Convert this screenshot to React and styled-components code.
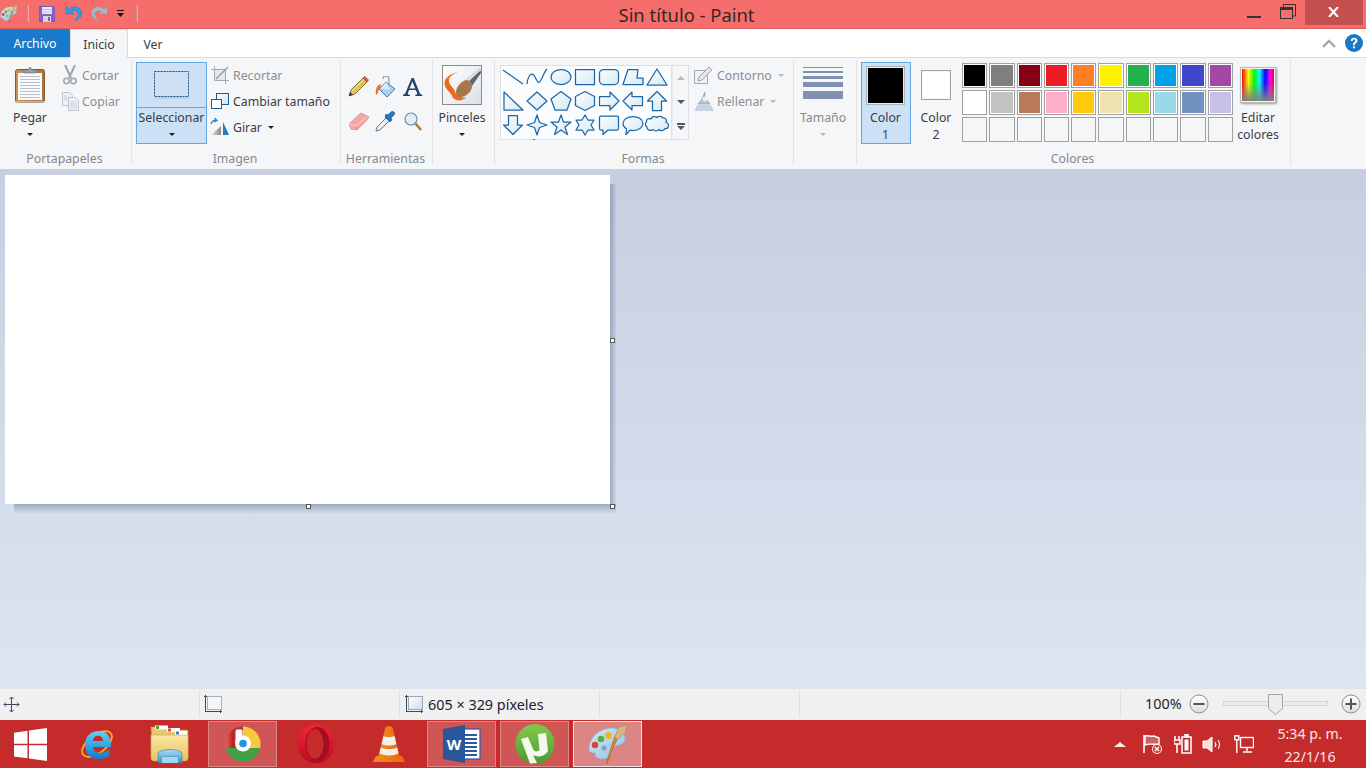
import React from "react";
import styled, { createGlobalStyle } from "styled-components";

const Global = createGlobalStyle`
  html, body { margin: 0; padding: 0; height: 100%; overflow: hidden; }
  body { font-family: "Noto Sans", "Open Sans", sans-serif; font-size: 12.3px; color: #3b3b45; }
  #root { height: 100%; }
  svg { display: block; flex: none; }
`;

const Page = styled.div`
  width: 1366px; height: 768px; display: flex; flex-direction: column; overflow: hidden;
`;
const TitleBar = styled.header`
  height: 28px; flex: none; background: #f56e6c; border-bottom: 1px solid #d85d5b;
  display: flex; align-items: flex-start; position: relative;
`;
const QuickBar = styled.div`
  display: flex; align-items: center; height: 27px; width: 140px; flex: none;
`;
const QuickItem = styled.span`display: block; flex: none; margin-left: ${p => p.$ml || 0}px;`;
const QuickSep = styled.span`
  width: 1px; height: 17px; background: #c98b8b; box-shadow: 1px 0 0 #f9a5a3; margin: ${p => p.$m};
`;
const TitleText = styled.h1`
  flex: 1; margin: 0; font-weight: 400; font-size: 18.4px; line-height: 29px; color: #3a2626;
  text-align: center; padding-right: 4px; white-space: nowrap;
`;
const WinControls = styled.div`display: flex; height: 26px; flex: none; padding-right: 3px;`;
const WinBtn = styled.div`
  width: ${p => p.$w}px; height: 25px; box-sizing: border-box; display: flex; align-items: center; justify-content: center;
  padding: ${p => p.$pad || "0"};
  background: ${p => p.$bg || "transparent"};
`;

const TabRow = styled.nav`
  height: 28px; flex: none; background: #fff; border-bottom: 1px solid #dadbdc; display: flex; align-items: stretch;
`;
const FileTab = styled.div`
  width: 70px; background: #1979ca; color: #fff; display: flex; align-items: center; justify-content: center;
  height: 28px; box-sizing: border-box;
`;
const Tab = styled.div`
  width: ${p => p.$w}px; height: 29px; box-sizing: border-box; display: flex; align-items: center; justify-content: center;
  padding-top: 1px; color: #3b3b45;
  ${p => p.$active ? "background:#f5f6f7;border:1px solid #dadbdc;border-bottom:none;" : ""}
`;
const TabEnd = styled.div`
  margin-left: auto; display: flex; align-items: center; gap: 9px; padding-right: 3px;
`;

const Ribbon = styled.section`
  flex: none; background: #f5f6f7; border-bottom: 1px solid #ccd2db;
  padding-top: 2px; box-sizing: content-box; display: flex; height: 109px;
`;
const Group = styled.div`
  width: ${p => p.$w}px; height: 105px; box-sizing: border-box; border-right: 1px solid #e2e4e7; flex: none;
  display: flex; flex-direction: column;
`;
const GroupBody = styled.div`
  height: 89px; flex: none; padding: 2px 0 0 ${p => p.$pl || 0}px; box-sizing: border-box; display: flex; align-items: flex-start;
  padding-right: ${p => p.$pr || 0}px;
`;
const GroupLabel = styled.div`
  height: 16px; line-height: 19px; text-align: center; color: #85888d; padding-right: 2px; white-space: nowrap;
`;
const LargeBtn = styled.div`
  width: ${p => p.$w}px; height: 82px; box-sizing: border-box; flex: none; display: flex; flex-direction: column; align-items: center;
  border: 1px solid ${p => p.$on ? "#62a6e6" : "transparent"}; background: ${p => p.$on ? "#cce0f6" : "transparent"};
  color: ${p => p.$off ? "#85888d" : "#3b3b45"}; padding-right: ${p => p.$pr || 0}px;
`;
const LargeIcon = styled.div`
  height: 44px; flex: none; align-self: stretch; display: flex; align-items: center; justify-content: center;
  ${p => p.$div ? "border-bottom:1px solid #62a6e6;" : "padding-bottom:1px;"}
`;
const LargeText = styled.div`
  height: 17px; line-height: 17px; white-space: nowrap; flex: none; margin-top: ${p => p.$mt || 0}px; display: flex; align-items: center;
`;
const SmallCol = styled.div`display: flex; flex-direction: column; margin-left: ${p => p.$ml || 0}px;`;
const SmallRow = styled.div`
  height: 26px; display: flex; align-items: center; gap: 4px; white-space: nowrap;
  color: ${p => p.$off ? "#8b8e93" : "#3b3b45"};
`;
const SmallIcon = styled.span`width: ${p => p.$w}px; display: flex; justify-content: center; flex: none;`;
const Caret = styled.span`
  width: 0; height: 0; border-left: 3px solid transparent; border-right: 3px solid transparent;
  border-top: 3px solid ${p => p.$c || "#222"}; margin-left: ${p => p.$ml || 0}px; display: block;
`;
const ToolGrid = styled.div`
  display: grid; grid-template-columns: repeat(3, 27px); grid-auto-rows: 35px; margin-top: 7px;
`;
const Tool = styled.div`display: flex; align-items: center; justify-content: center;`;
const Gallery = styled.div`
  display: flex; margin-top: 3px; height: 75px; position: relative;
`;
const ShapeGrid = styled.div`
  width: 172px; height: 75px; box-sizing: border-box; border: 1px solid #dcdfe3; background: #fbfcfe; display: grid;
  grid-template-columns: repeat(7, 24px); grid-auto-rows: 24px;
`;
const Shape = styled.div`width: 24px; height: 24px;`;
const Dot = styled.span`position: absolute; left: 33px; bottom: 0; width: 2px; height: 1px; background: #2a6db0;`;
const ScrollCol = styled.div`
  width: 17px; box-sizing: border-box; border: 1px solid #dcdfe3; border-left: 1px solid #e8eaed; background: #f5f6f7;
  display: flex; flex-direction: column;
`;
const ScrollBtn = styled.div`height: 24px; display: flex; align-items: center; justify-content: center;`;
const UpTri = styled.span`
  width: 0; height: 0; border-left: 4px solid transparent; border-right: 4px solid transparent; border-bottom: 4px solid #b9bcc1;
`;
const DownTri = styled.span`
  width: 0; height: 0; border-left: 4px solid transparent; border-right: 4px solid transparent; border-top: 4px solid #4e5866;
`;
const MoreBtn = styled.span`
  width: 8px; border-top: 2px solid #4e5866; padding-top: 1px; display: block;
  &::after { content: ""; display: block; width: 0; height: 0; border-left: 4px solid transparent; border-right: 4px solid transparent; border-top: 4px solid #4e5866; }
`;
const SizeLines = styled.div`
  width: 40px; height: 32px; display: flex; flex-direction: column; gap: 3px; margin-bottom: 4px;
`;
const SizeLine = styled.span`display: block; height: ${p => p.$h}px; background: #7f90b0; flex: none; margin-top: ${p => p.$mt || 0}px;`;
const Swatch1 = styled.div`
  width: 39px; height: 39px; box-sizing: border-box; border: 1px solid #8c8c8c; padding: 1px; background: #e9eef5;
  display: flex; outline: 1px solid #a9b2bd; outline-offset: -1px;
  &::after { content: ""; flex: 1; background: #000; }
`;
const Swatch2 = styled.div`
  width: 30px; height: 30px; box-sizing: border-box; border: 1px solid #a0a0a0; background: #fff; box-shadow: inset 0 0 2px #ddd;
`;
const Palette = styled.div`
  width: 271px; flex: none; margin: 1px 0 0 1px; display: grid; grid-template-columns: repeat(10, 1fr); grid-auto-rows: 25px; gap: 2px;
`;
const Cell = styled.div`
  box-sizing: border-box; border: 1px solid #a0a0a0; padding: 1px; background: ${p => p.$empty ? "#f5f6f7" : "#fff"}; display: flex;
  &::after { content: ""; flex: 1; background: ${p => p.$c || "transparent"}; }
`;
const Spectrum = styled.div`
  width: 36px; height: 36px; box-sizing: border-box; border: 1px solid #b9b9b9; padding: 1px; background: #f7f7f7; box-shadow: 1px 1px 2px #999; display: flex;
  &::after { content: ""; flex: 1;
    background: linear-gradient(to bottom, rgba(128,128,128,0) 0%, rgba(128,128,128,.1) 45%, rgba(128,128,128,1) 100%),
      linear-gradient(to right, #f00, #ff0 20%, #0f0 38%, #0ff 55%, #00f 72%, #f0f 88%, #f00); }
`;

const Workspace = styled.main`
  flex: 1; min-height: 0; padding: 5px; box-sizing: border-box; background: linear-gradient(to bottom, #c5cfe0, #dce5f1);
`;
const Canvas = styled.div`
  width: 605px; height: 329px; background: #fff; position: relative;
  &::before { content: ""; position: absolute; left: 100%; top: 9px; width: 6px; height: 320px;
    background: linear-gradient(to right, rgba(80,100,135,.42), rgba(80,100,135,.06)); }
  &::after { content: ""; position: absolute; top: 100%; left: 9px; width: 602px; height: 9px;
    background: linear-gradient(to bottom, rgba(80,100,135,.42), rgba(80,100,135,.05)); }
`;
const Handle = styled.span`
  position: absolute; width: 3px; height: 3px; background: #fff; border: 1px solid #555; z-index: 1;
  left: ${p => p.$x}px; top: ${p => p.$y}px;
`;

const Status = styled.footer`
  height: 31px; flex: none; background: #f0f0f0; border-top: 1px solid #dde3ea; display: flex; font-size: 14.4px; color: #1c2230;
`;
const StatusCell = styled.div`
  width: ${p => p.$w}px; flex: none; box-sizing: border-box; border-right: 1px solid #dfdfdf; margin: 1px 0 2px; display: flex; align-items: center; gap: 4px; padding-left: ${p => p.$pl || 0}px; white-space: nowrap;
`;
const ZoomArea = styled.div`
  flex: 1; display: flex; align-items: center; padding-left: 24px; white-space: nowrap; padding-bottom: 2px;
`;
const ZoomPct = styled.span`width: 44px; flex: none;`;
const Slider = styled.div`
  width: 105px; height: 5px; border: 1px solid #d6d6d6; box-sizing: border-box; background: #ececec; margin: 0 13px 0 14px; position: relative;
`;
const Thumb = styled.span`position: absolute; left: 44px; top: -8px;`;

const Taskbar = styled.footer`
  height: 48px; flex: none; background: #c52b2b; display: flex; align-items: center; color: #fff;
`;
const Start = styled.div`width: 58px; flex: none; display: flex; justify-content: center; padding-left: 2px; box-sizing: border-box;`;
const Apps = styled.div`display: flex; gap: 4px; margin-left: 4px; height: 48px; align-items: center;`;
const AppSlot = styled.div`
  width: 69px; height: 46px; box-sizing: border-box; display: flex; align-items: center; justify-content: center;
  background: ${p => p.$state === "open" ? "rgba(255,255,255,.2)" : p.$state === "active" ? "rgba(255,255,255,.42)" : "transparent"};
  border: 1px solid ${p => p.$state === "open" ? "rgba(255,255,255,.3)" : p.$state === "active" ? "#f1e3e3" : "transparent"};
`;
const Tray = styled.div`margin-left: auto; display: flex; align-items: center; height: 48px;`;
const TrayItem = styled.span`width: ${p => p.$w}px; display: flex; justify-content: center; flex: none;`;
const TrayUp = styled.span`
  width: 0; height: 0; border-left: 6px solid transparent; border-right: 6px solid transparent; border-bottom: 5px solid #fbe7e7;
`;
const Clock = styled.div`
  width: 104px; text-align: center; font-size: 14.2px; line-height: 23px; flex: none; padding: 2px 8px 0 0; box-sizing: border-box; color: #f6e4e4; white-space: nowrap;
`;

/* ---------- icons ---------- */
const PaletteIcon = ({ size = 18 }) => (
  <svg width={size} height={size} viewBox="0 0 40 40">
    <defs><linearGradient id="pal" x1="0" y1="0" x2="1" y2="1"><stop offset="0" stopColor="#d3e7f4" /><stop offset="1" stopColor="#8fc3e2" /></linearGradient></defs>
    <path d="M1 25C1 13 12 4 24 4c8 0 13 5 13 11 0 5-6 6-9 7-4 2-3 6-5 9-3 5-11 5-15 2-2-2 1-4-2-4-3 0-5-1-5-4z" fill="url(#pal)" stroke="#86b3cf" strokeWidth=".7" />
    <circle cx="7" cy="21" r="3.200" fill="#d8423a" /><circle cx="13" cy="15" r="3.200" fill="#59ab45" /><circle cx="20.500" cy="11.500" r="3.400" fill="#f1b51f" /><circle cx="16" cy="24" r="2.600" fill="#7f9fc9" />
    <path d="M29 15l-9 22-1.200 2.500.3-3L26.500 13z" fill="#e2832a" stroke="#a9591c" strokeWidth=".6" />
    <path d="M26.500 13L31 3l8-2.500-1.500 8L30 15.500z" fill="#d9b483" stroke="#a88a5c" strokeWidth=".6" />
  </svg>
);
const SaveIcon = () => (
  <svg width="16" height="16" viewBox="0 0 16 16">
    <path d="M0 0h14l2 2v14H0z" fill="#8662c4" stroke="#6a4ba6" strokeWidth=".6" />
    <rect x="3" y="1" width="10" height="7" fill="#e8eef6" /><rect x="3" y="3" width="10" height="1" fill="#b8c4d6" /><rect x="3" y="5.500" width="10" height="1" fill="#b8c4d6" />
    <rect x="4" y="10" width="8" height="6" fill="#d9d3e8" /><rect x="9" y="11" width="2" height="4" fill="#7d61b4" />
  </svg>
);
const UndoIcon = ({ c = "#2b9ce8", d = "#1b6fb8" }) => (
  <svg width="17" height="17" viewBox="0 0 17 17">
    <path d="M1 1v8h8L6.500 6.500C8 5.500 11 5 12.500 7c1.500 2 .5 5.500-3 8.500 3.500-.3 7-3 7-7.500C16.500 3 11 .5 6.500 2.500L4 4.500 1 1z" fill={c} stroke={d} strokeWidth=".4" />
  </svg>
);
const RedoIcon = () => (
  <svg width="17" height="17" viewBox="0 0 17 17"><g transform="matrix(-1 0 0 1 17 0)"><path d="M1 1v8h8L6.500 6.500C8 5.500 11 5 12.500 7c1.500 2 .5 5.500-3 8.500 3.500-.3 7-3 7-7.500C16.500 3 11 .5 6.500 2.500L4 4.500 1 1z" fill="#a9b8c8" stroke="#8b9bad" strokeWidth=".4" /></g></svg>
);
const QatMore = () => (
  <svg width="8" height="8" viewBox="0 0 8 8"><rect y="0" width="7" height="1" fill="#111" /><path d="M0 3h7L3.500 7z" fill="#111" /></svg>
);
const Clipboard = () => (
  <svg width="32" height="38" viewBox="0 0 32 38">
    <defs><linearGradient id="brd" x1="0" x2="1"><stop offset="0" stopColor="#c4915b" /><stop offset="1" stopColor="#a9743f" /></linearGradient></defs>
    <rect x="1.500" y="3.500" width="29" height="33" rx="2" fill="url(#brd)" stroke="#85592e" />
    <rect x="1" y="35" width="30" height="2" fill="#cfd3d8" opacity=".6" />
    <rect x="4" y="7" width="24" height="27" fill="#fafafa" />
    {[10, 13, 16, 19, 22, 25, 28, 31].map(y => <rect key={y} x="6" y={y} width="20" height="1" fill="#b8bfd0" />)}
    <path d="M10 7V4h4l2-3 2 3h4v3z" fill="#9aa0a8" stroke="#6f747b" strokeWidth=".7" />
  </svg>
);
const Scissors = () => (
  <svg width="14" height="20" viewBox="0 0 14 20" fill="none" stroke="#9aa5b1">
    <path d="M2 0l6 13M12 0L6 13" strokeWidth="2" /><circle cx="3.500" cy="16" r="2.700" strokeWidth="1.500" /><circle cx="10.500" cy="16" r="2.700" strokeWidth="1.500" />
  </svg>
);
const CopyIcon = () => (
  <svg width="17" height="19" viewBox="0 0 17 19" fill="#f0f3f6" stroke="#bcc5cf">
    <path d="M.5.5h7l3 3v10H.5z" /><path d="M6.500 5.500h7l3 3v10h-10z" /><path d="M8 10h7M8 12h7M8 14h7M8 16h7M2 4h4M2 6h3M2 8h3" strokeWidth=".8" />
  </svg>
);
const SelectIcon = () => (
  <svg width="36" height="28" viewBox="0 0 36 28">
    <rect x="1" y="26" width="35" height="2" fill="#bcd0e8" />
    <rect x=".5" y=".5" width="34" height="25" fill="#cfe0f4" stroke="#174f86" strokeDasharray="2 1" />
  </svg>
);
const CropIcon = () => (
  <svg width="18" height="18" viewBox="0 0 18 18" fill="none" stroke="#a0abb6">
    <rect x="4" y="4" width="10" height="10" fill="#dde3ea" stroke="none" opacity=".7" />
    <path d="M3.500 0v14.500H18M0 3.500h14.500V18" /><path d="M5 13L17 1" stroke="#8a97a5" strokeWidth="1.300" />
  </svg>
);
const ResizeIcon = () => (
  <svg width="18" height="16" viewBox="0 0 18 16">
    <defs><linearGradient id="rs" x1="0" y1="0" x2="1" y2="1"><stop offset="0" stopColor="#fff" /><stop offset="1" stopColor="#cfe3f2" /></linearGradient></defs>
    <rect x="5.500" y=".5" width="12" height="11" fill="url(#rs)" stroke="#1c5e9a" />
    <rect x=".5" y="6.500" width="10" height="9" fill="#fff" stroke="#1c5e9a" />
  </svg>
);
const RotateIcon = () => (
  <svg width="20" height="18" viewBox="0 0 20 18">
    <defs><linearGradient id="rt" x1="0" x2="1"><stop offset="0" stopColor="#e6e6e6" /><stop offset="1" stopColor="#8b8b8b" /></linearGradient></defs>
    <path d="M1 17L11 8v9z" fill="url(#rt)" /><path d="M13 4l6 13h-6z" fill="#2679bd" />
    <path d="M1 6C2 3 4 2 6 2.500M4.500 0l2.500 2.500-3 1.500" fill="none" stroke="#2b86d6" strokeWidth="1.300" />
  </svg>
);
const Pencil = () => (
  <svg width="21" height="21" viewBox="0 0 21 21">
    <path d="M1 20l2-6L15 2l4 4L7 18z" fill="#eac14c" stroke="#6b5a2b" strokeWidth=".8" />
    <path d="M1 20l1-4 3 3z" fill="#3a3a3a" /><path d="M15 2l2-1.500 3.500 3.500L19 6z" fill="#d4605a" stroke="#8f3d39" strokeWidth=".6" />
    <path d="M4 15L16 3" stroke="#f8e49b" />
  </svg>
);
const Bucket = () => (
  <svg width="21" height="22" viewBox="0 0 21 22">
    <path d="M11 6l9 7-8 8-8-8z" fill="#a9d0ee" stroke="#3d81b8" />
    <path d="M11 6L6 12c2 1 5 2 9 1z" fill="#dcecf9" />
    <path d="M8 3a3 3 0 016 0v7" fill="none" stroke="#9aa6b1" strokeWidth="1.400" />
    <path d="M6 8C2 9 0 13 1 19c2-1 2-4 3-6 1-1 2-3 2-5z" fill="#f0712a" />
  </svg>
);
const BigA = () => (
  <svg width="20" height="18" viewBox="0 0 20 18">
    <path d="M0 18v-1.200c1.300-.2 1.800-.5 2.500-2L8.700 0h2l6 15c.6 1.300 1.200 1.600 2.600 1.800V18h-7v-1.200c2-.2 2.200-.7 1.700-2L12.800 12H6l-1 2.700c-.5 1.400 0 1.900 2 2.100V18zM6.500 10.500h5.700L9.400 3.500z" fill="#24416f" />
  </svg>
);
const Eraser = () => (
  <svg width="22" height="19" viewBox="0 0 22 19">
    <path d="M1 12L13 1l8 4-2 3-10 10-6-1z" fill="#f4a8a4" stroke="#d77e7a" strokeWidth=".7" />
    <path d="M1 12l7 2 11-9" fill="none" stroke="#fbd3d0" />
    <path d="M8 14l1 4" stroke="#d77e7a" strokeWidth=".7" />
  </svg>
);
const Dropper = () => (
  <svg width="21" height="21" viewBox="0 0 21 21">
    <path d="M1 20l1-4L11 7l3 3-9 9z" fill="#eaf0f6" stroke="#6d7682" />
    <path d="M10 6l5 5 2-2-1-2 3-3c1-1 1-2 0-3s-2-1-3 0l-3 3-2-1z" fill="#2679bd" stroke="#17507f" strokeWidth=".6" />
  </svg>
);
const Magnifier = () => (
  <svg width="18" height="19" viewBox="0 0 18 19">
    <circle cx="7" cy="7" r="6" fill="#e1eefa" stroke="#7e8c9b" strokeWidth="1.200" />
    <path d="M11.500 11.500L17 18" stroke="#a8793f" strokeWidth="2.400" />
  </svg>
);
const BrushIcon = () => (
  <svg width="40" height="40" viewBox="0 0 40 40">
    <defs><linearGradient id="bg1" x1="0" y1="0" x2="1" y2="1"><stop offset="0" stopColor="#fff" /><stop offset="1" stopColor="#d9e2e8" /></linearGradient></defs>
    <rect x=".5" y=".5" width="39" height="39" fill="url(#bg1)" stroke="#8c8c8c" />
    <path d="M16 7C9 9 2 12 2.500 19c.4 5 6 8 7.500 12 1 3 5 6 11 3.500 2-1 3-2 3-2-6 0-10-2-11-6-1-4-7-7-6-12C7.500 11 12 9 16 7z" fill="#ee6a1f" />
    <path d="M38 3L24 15l6 6L39 8z" fill="#62656e" /><path d="M38 3L24 15l2 2L39 5z" fill="#dfe2e6" />
    <path d="M24 15c-4 1-9 6-10 11-.5 3 .5 5 2.500 6 5 1 11-3 13-8 1-3 .5-5-.5-6.500-1-1.500-3-2.500-5-2.500z" fill="#a9794b" />
    <path d="M17 23l9-6M16 27l12-8M18 30l10-7" stroke="#7f5a34" strokeWidth=".6" strokeDasharray="1 1" />
  </svg>
);
const ContornoIcon = () => (
  <svg width="19" height="18" viewBox="0 0 19 18">
    <path d="M.5 4.500h13M.5 4.500v13h13V8" fill="#eef1f5" stroke="#a0abb6" />
    <path d="M4 15l1-4L15 1l3 3L8 14z" fill="#dfe5eb" stroke="#929eab" strokeWidth=".9" />
  </svg>
);
const RellenarIcon = () => (
  <svg width="20" height="20" viewBox="0 0 20 20">
    <path d="M0 20l3-6h14l3 6z" fill="#c6d3e3" />
    <path d="M11 1v6l5 6H4l4-5z" fill="#b8c4d2" stroke="#94a2b2" strokeWidth=".8" /><circle cx="11" cy="8" r="2.500" fill="#ecf0f5" />
  </svg>
);
const SHAPES = [
  "M2 5L22 19",
  "M2 19C3 10 7 6 10 12S14 20 17 13 20 6 22 4",
  "M22 12c0 4.200-4.500 7.500-10 7.500S2 16.200 2 12 6.500 4.500 12 4.500 22 7.800 22 12z",
  "M2.500 4.500h19v15h-19z",
  "M6.500 4.500h11a4 4 0 014 4v7a4 4 0 01-4 4h-11a4 4 0 01-4-4v-7a4 4 0 014-4z",
  "M7 4.500h10L16 13h6v6.500H2z",
  "M12 4L22 20H2z",
  "M3 3l19 18H3z",
  "M12 3l10 9-10 9-10-9z",
  "M12 2.500L22 10l-4 11H6L2 10z",
  "M12 2.500l9.500 5v9l-9.500 5-9.500-5v-9z",
  "M2.500 7.500H13V3l9 9-9 9v-4.500H2.500z",
  "M21.500 7.500H11V3l-9 9 9 9v-4.500h10.500z",
  "M12 2.500l9.500 9.500h-5v9.500h-9V12h-5z",
  "M7.500 2.500h9V12h5L12 21.500 2.500 12h5z",
  "M12 2l2.500 7.500L22 12l-7.500 2.500L12 22l-2.500-7.500L2 12l7.500-2.500z",
  "M12 2l2.500 7H22l-6 5 2.500 7.500L12 17l-6.500 4.500L8 14 2 9h7.500z",
  "M12 2l3 5h6l-3 5 3 5h-6l-3 5-3-5H3l3-5-3-5h6z",
  "M4 3h16a1.500 1.500 0 011.500 1.500v11A1.500 1.500 0 0120 17h-9l-5 4.500V17H4a1.500 1.500 0 01-1.500-1.500v-11A1.500 1.500 0 014 3z",
  "M22 10.500c0 3.900-4.500 7-10 7-1 0-2-.1-3-.3L5 21.500l.5-5.500C3.400 14.700 2 12.700 2 10.500c0-3.900 4.500-7 10-7s10 3.100 10 7z",
  "M6 6a3.500 3 0 016-1.500 3.500 3 0 016 .5 3 3 0 013 4.500 3 3 0 01-1 6 3.500 3 0 01-6 1 3.500 3 0 01-6 0 3.500 3 0 01-6-2.500 3 3 0 01-.5-5A3 3 0 016 6z",
];
const ShapeIcon = ({ d, i }) => (
  <svg width="24" height="24" viewBox="0 1 24 24">
    <defs><linearGradient id={`sf${i}`} x1="0" y1="0" x2="1" y2="1"><stop offset="0" stopColor="#fdfeff" /><stop offset="1" stopColor="#d5e8f1" /></linearGradient></defs>
    <path d={d} fill={i < 2 ? "none" : `url(#sf${i})`} stroke="#1d68aa" strokeWidth="1.250" strokeLinejoin="round" />
  </svg>
);

const CollapseChevron = () => (
  <svg width="14" height="9" viewBox="0 0 14 9"><path d="M1 8l6-6 6 6" fill="none" stroke="#a4a8ad" strokeWidth="2.400" /></svg>
);
const HelpIcon = () => (
  <svg width="18" height="18" viewBox="0 0 18 18">
    <circle cx="9" cy="9" r="9" fill="#1a78c9" />
    <path d="M5.800 7c0-2 1.400-3.200 3.400-3.200s3.300 1.100 3.300 2.800c0 2.600-2.700 2.500-2.700 4.600H8c-.1-3 2.400-3 2.400-4.600 0-.7-.5-1.100-1.200-1.100-.8 0-1.300.5-1.400 1.500z" fill="#fff" />
    <rect x="8" y="12.300" width="1.900" height="2" fill="#fff" />
  </svg>
);
const WinMin = () => <svg width="14" height="2"><rect width="14" height="2" fill="#333" /></svg>;
const WinRestore = () => (
  <svg width="16" height="15" viewBox="0 0 16 15" fill="none" stroke="#333"><rect x=".5" y="3.500" width="12" height="11" /><rect x=".5" y="3.500" width="12" height="2" fill="#333" /><path d="M3.500 3V.5h12V12H13" /></svg>
);
const WinClose = () => (
  <svg width="11" height="10" viewBox="0 0 11 10"><path d="M1 0l9 10M10 0L1 10" stroke="#fff" strokeWidth="2" /></svg>
);

const MoveIcon = () => (
  <svg width="17" height="17" viewBox="0 0 17 17" fill="none" stroke="#3d4a5c"><path d="M8.500 1v15M1 8.500h15" /><path d="M6.500 3l2-2 2 2M6.500 14l2 2 2-2M3 6.500l-2 2 2 2M14 6.500l2 2-2 2" /></svg>
);
const SelSize = () => (
  <svg width="19" height="18" viewBox="0 0 19 18" fill="none">
    <rect x="3.500" y="1.500" width="14" height="13" stroke="#5f6b7a" strokeDasharray="1 1" fill="#f4f6f8" />
    <path d="M1.500 0v17M1 16.500h17M0 1.500h3M16.500 15v3" stroke="#3d4a5c" />
  </svg>
);
const CanvasSize = () => (
  <svg width="19" height="18" viewBox="0 0 19 18">
    <defs><linearGradient id="cs" x1="0" y1="0" x2="1" y2="1"><stop offset="0" stopColor="#fff" /><stop offset="1" stopColor="#c9dcec" /></linearGradient></defs>
    <rect x="3.500" y="1.500" width="14" height="13" fill="url(#cs)" stroke="#9aa8b8" />
    <path d="M1.500 0v17M1 16.500h17M0 1.500h3M16.500 15v3" stroke="#3d4a5c" fill="none" />
  </svg>
);
const ZoomBtn = ({ plus }) => (
  <svg width="20" height="20" viewBox="0 0 20 20">
    <defs><linearGradient id={plus ? "zp" : "zm"} x1="0" y1="0" x2="0" y2="1"><stop offset="0" stopColor="#fff" /><stop offset="1" stopColor="#dcdcdc" /></linearGradient></defs>
    <circle cx="10" cy="10" r="9" fill={`url(#${plus ? "zp" : "zm"})`} stroke="#8f8f8f" />
    <rect x="4.500" y="9" width="11" height="2" fill="#555" />
    {plus && <rect x="9" y="4.500" width="2" height="11" fill="#555" />}
  </svg>
);
const ThumbIcon = () => (
  <svg width="15" height="21" viewBox="0 0 15 21"><path d="M.5.5h14v14l-7 6-7-6z" fill="#ececec" stroke="#a5a5a5" /></svg>
);

const WinLogo = () => (
  <svg width="33" height="33" viewBox="0 0 33 33" fill="#fff">
    <path d="M0 4.700l13.500-1.900v13H0zM15 2.600L33 0v15.800H15zM0 17.300h13.500v13L0 28.400zM15 17.300h18V33l-18-2.500z" />
  </svg>
);
const IE = () => (
  <svg width="38" height="38" viewBox="0 0 38 38">
    <defs><linearGradient id="ie" x1="0" y1="0" x2="0" y2="1"><stop offset="0" stopColor="#5fd1f5" /><stop offset="1" stopColor="#1679cc" /></linearGradient></defs>
    <ellipse cx="19" cy="19" rx="17.500" ry="9" transform="rotate(-38 19 19)" fill="none" stroke="#efb325" strokeWidth="1.800" />
    <path d="M7 20C7 11 13 6 21 6c8 0 12 6 12 14v2H15c0 6 8 8 16 3v6c-4 3-8 3-11 3C12 34 7 28 7 20zm8-4h10c0-7-10-7-10 0z" fill="url(#ie)" fillRule="evenodd" />
  </svg>
);
const Folder = () => (
  <svg width="40" height="40" viewBox="0 0 40 40">
    <defs>
      <linearGradient id="fd" x1="0" y1="0" x2="0" y2="1"><stop offset="0" stopColor="#fbe8a5" /><stop offset="1" stopColor="#e6c163" /></linearGradient>
      <linearGradient id="fb" x1="0" y1="0" x2="0" y2="1"><stop offset="0" stopColor="#a8dcf4" /><stop offset="1" stopColor="#3d93c9" /></linearGradient>
    </defs>
    <path d="M1 3h14l2 3h21v28H3z" fill="#e5c673" stroke="#bfa050" strokeWidth=".6" />
    <rect x="5" y="1.500" width="13" height="4" fill="#fff" /><rect x="6" y="2" width="3" height="3" fill="#4aa245" />
    <rect x="17" y="4" width="13" height="4" fill="#fff" /><rect x="18" y="4.500" width="3" height="3" fill="#d84a3a" />
    <rect x="25" y="7" width="12" height="4" fill="#fff" /><rect x="26" y="7.500" width="3" height="3" fill="#3a7fd8" />
    <path d="M1 11h37v23a3 3 0 01-3 3H4a3 3 0 01-3-3z" fill="url(#fd)" stroke="#caa654" strokeWidth=".6" />
    <path d="M8 39v-9c0-6 24-6 24 0v9h-4v-6H12v6z" fill="url(#fb)" stroke="#2f79a9" strokeWidth=".6" />
    <path d="M12 39v-6h16v6z" fill="#a4d6ee" />
  </svg>
);
const ChromeB = () => (
  <svg width="36" height="36" viewBox="0 0 36 36">
    <defs><linearGradient id="cbr" x1="0" x2="1"><stop offset="0" stopColor="#e8665d" /><stop offset=".4" stopColor="#b8271f" /><stop offset="1" stopColor="#c8352c" /></linearGradient></defs>
    <path d="M18 22V.5A17.500 17.500 0 00.9 22z" fill="url(#cbr)" />
    <path d="M18 .5A17.500 17.500 0 0135.100 22H18z" fill="#f4cb3c" />
    <path d="M.9 22a17.500 17.500 0 0034.200 0z" fill="#43a047" />
    <rect x="10.500" y="3.500" width="7" height="15" rx="1.500" fill="#fff" />
    <circle cx="18" cy="17.500" r="8" fill="#fff" /><circle cx="18" cy="17.500" r="3.800" fill="#1e96e0" />
  </svg>
);
const Opera = () => (
  <svg width="38" height="40" viewBox="0 0 38 40">
    <defs><linearGradient id="op" x1="0" y1="0" x2="0" y2="1"><stop offset="0" stopColor="#f4233c" /><stop offset="1" stopColor="#bb0b20" /></linearGradient></defs>
    <ellipse cx="19" cy="20" rx="18.500" ry="19.500" fill="url(#op)" />
    <ellipse cx="20.500" cy="20" rx="12" ry="17" fill="#a30e1f" />
    <ellipse cx="18" cy="20" rx="8.500" ry="15" fill="#c52b2b" />
  </svg>
);
const Vlc = () => (
  <svg width="34" height="38" viewBox="0 0 34 38">
    <defs><linearGradient id="vl" x1="0" x2="1"><stop offset="0" stopColor="#f78c1e" /><stop offset="1" stopColor="#e46a0e" /></linearGradient></defs>
    <path d="M1 37l3-6h26l3 6z" fill="url(#vl)" />
    <path d="M13 4c0-4 8-4 8 0l7 29c-3 3-19 3-22 0z" fill="url(#vl)" />
    <path d="M11.500 11c3 1.500 8 1.500 11 0l1.800 8c-4 2-10.500 2-14.600 0zM8.800 22.500c4.500 2 12 2 16.400 0l1.300 6c-5 2.500-14 2.500-19 0z" fill="#f2f0ea" />
  </svg>
);
const Word = () => (
  <svg width="38" height="38" viewBox="0 0 38 38">
    <rect x="17" y="4" width="20" height="30" fill="#fff" stroke="#2a5aa5" strokeWidth="1.200" />
    {[9, 13, 17, 21, 25, 29].map(y => <rect key={y} x="22" y={y} width="12" height="2" fill="#2a5aa5" />)}
    <path d="M0 4L22 0v38L0 34z" fill="#2b579a" />
    <text x="11" y="25" fontFamily="Noto Sans, sans-serif" fontWeight="700" fontSize="15" fill="#fff" textAnchor="middle">W</text>
  </svg>
);
const UTorrent = () => (
  <svg width="40" height="40" viewBox="0 0 40 40">
    <defs><linearGradient id="ut" x1="0" y1="0" x2="0" y2="1"><stop offset="0" stopColor="#85c94a" /><stop offset="1" stopColor="#4c9a33" /></linearGradient></defs>
    <ellipse cx="20" cy="20" rx="19.500" ry="20" fill="url(#ut)" />
    <path d="M6 15l7-2 5 12c1 3 5 3 6.500 1L23 10l8-1 2 18c-3 5-9 7-15 4l4 8-7 .5z" fill="#f6f8f0" />
  </svg>
);
const PaintLogo = () => <PaletteIcon size={40} />;

const FlagIcon = () => (
  <svg width="22" height="22" viewBox="0 0 22 22">
    <path d="M2 2v18" stroke="#fff" strokeWidth="1.600" /><path d="M3 3c3-1 6 1 9 0l5 2v6c-4 1-9-1-14 1z" fill="rgba(255,255,255,.25)" stroke="#fff" strokeWidth="1.400" />
    <circle cx="15" cy="16" r="5" fill="#fff" /><circle cx="15" cy="16" r="4" fill="#d63a3a" /><path d="M13 14l4 4M17 14l-4 4" stroke="#fff" strokeWidth="1.300" />
  </svg>
);
const BatteryIcon = () => (
  <svg width="18" height="20" viewBox="0 0 18 20" fill="none" stroke="#fff" strokeWidth="1.500">
    <path d="M1 2v4M5 2v4M0 6h6v4H0zM3 10v9" /><rect x="8" y="3" width="9" height="16" /><rect x="11" y="0.700" width="3" height="2" fill="#fff" /><rect x="10.500" y="5.500" width="4" height="11" fill="#fff" stroke="none" />
  </svg>
);
const VolumeIcon = () => (
  <svg width="20" height="17" viewBox="0 0 20 17" fill="none" stroke="#fff">
    <path d="M1 5h4l5-4v15l-5-4H1z" fill="rgba(255,255,255,.85)" /><path d="M13 6c1 1.500 1 3.500 0 5M16 4c2 2.500 2 6.500 0 9" strokeWidth="1.100" />
  </svg>
);
const NetIcon = () => (
  <svg width="20" height="19" viewBox="0 0 20 19" fill="none" stroke="#fff" strokeWidth="1.400">
    <rect x="6.500" y="2.500" width="13" height="10" /><path d="M13 13v3M9 17h9" /><rect x=".8" y=".8" width="4" height="4" /><path d="M2.800 5v13" />
  </svg>
);

const TOP = ["#000000", "#7f7f7f", "#880015", "#ed1c24", "#ff7f27", "#fff200", "#22b14c", "#00a2e8", "#3f48cc", "#a349a4"];
const MID = ["#ffffff", "#c3c3c3", "#b97a57", "#ffaec9", "#ffc90e", "#efe4b0", "#b5e61d", "#99d9ea", "#7092be", "#c8bfe7"];

export default function App() {
  return (
    <Page>
      <Global />
      <TitleBar>
        <QuickBar>
          <PaletteIcon size={18} />
          <QuickSep $m="0 11px 0 9px" />
          <SaveIcon />
          <QuickItem $ml={10}><UndoIcon /></QuickItem>
          <QuickItem $ml={9}><RedoIcon /></QuickItem>
          <QuickItem $ml={9}><QatMore /></QuickItem>
          <QuickSep $m="0 0 0 11px" />
        </QuickBar>
        <TitleText>Sin título - Paint</TitleText>
        <WinControls>
          <WinBtn $w={34} $pad="8px 0 0"><WinMin /></WinBtn>
          <WinBtn $w={34} $pad="0 0 2px"><WinRestore /></WinBtn>
          <WinBtn $w={58} $bg="#c44f4f" $pad="0 2px 2px 0"><WinClose /></WinBtn>
        </WinControls>
      </TitleBar>
      <TabRow>
        <FileTab>Archivo</FileTab>
        <Tab $active $w={58}>Inicio</Tab>
        <Tab $w={50}>Ver</Tab>
        <TabEnd><CollapseChevron /><HelpIcon /></TabEnd>
      </TabRow>
      <Ribbon>
        <Group $w={132}>
          <GroupBody $pl={8}>
            <LargeBtn $w={44}>
              <LargeIcon><Clipboard /></LargeIcon>
              <LargeText $mt={1}>Pegar</LargeText>
              <LargeText><Caret /></LargeText>
            </LargeBtn>
            <SmallCol $ml={10}>
              <SmallRow $off><SmallIcon $w={16}><Scissors /></SmallIcon>Cortar</SmallRow>
              <SmallRow $off><SmallIcon $w={16}><CopyIcon /></SmallIcon>Copiar</SmallRow>
            </SmallCol>
          </GroupBody>
          <GroupLabel>Portapapeles</GroupLabel>
        </Group>
        <Group $w={209}>
          <GroupBody $pl={4}>
            <LargeBtn $w={71} $on>
              <LargeIcon $div><SelectIcon /></LargeIcon>
              <LargeText $mt={1}>Seleccionar</LargeText>
              <LargeText><Caret /></LargeText>
            </LargeBtn>
            <SmallCol $ml={4}>
              <SmallRow $off><SmallIcon $w={18}><CropIcon /></SmallIcon>Recortar</SmallRow>
              <SmallRow><SmallIcon $w={18}><ResizeIcon /></SmallIcon>Cambiar tamaño</SmallRow>
              <SmallRow><SmallIcon $w={18}><RotateIcon /></SmallIcon>Girar<Caret $ml={2} /></SmallRow>
            </SmallCol>
          </GroupBody>
          <GroupLabel>Imagen</GroupLabel>
        </Group>
        <Group $w={92}>
          <GroupBody $pl={4}>
            <ToolGrid>
              <Tool><Pencil /></Tool>
              <Tool><Bucket /></Tool>
              <Tool><BigA /></Tool>
              <Tool><Eraser /></Tool>
              <Tool><Dropper /></Tool>
              <Tool><Magnifier /></Tool>
            </ToolGrid>
          </GroupBody>
          <GroupLabel>Herramientas</GroupLabel>
        </Group>
        <Group $w={62}>
          <GroupBody $pl={4}>
            <LargeBtn $w={50}>
              <LargeIcon><BrushIcon /></LargeIcon>
              <LargeText $mt={1}>Pinceles</LargeText>
              <LargeText><Caret /></LargeText>
            </LargeBtn>
          </GroupBody>
          <GroupLabel>&nbsp;</GroupLabel>
        </Group>
        <Group $w={299}>
          <GroupBody $pl={5}>
            <Gallery>
              <ShapeGrid>
                {SHAPES.map((d, i) => <Shape key={i}><ShapeIcon d={d} i={i} /></Shape>)}
              </ShapeGrid>
              <Dot />
              <ScrollCol>
                <ScrollBtn><UpTri /></ScrollBtn>
                <ScrollBtn><DownTri /></ScrollBtn>
                <ScrollBtn><MoreBtn /></ScrollBtn>
              </ScrollCol>
            </Gallery>
            <SmallCol $ml={5}>
              <SmallRow $off><SmallIcon $w={19}><ContornoIcon /></SmallIcon>Contorno<Caret $c="#b5b8bc" $ml={2} /></SmallRow>
              <SmallRow $off><SmallIcon $w={19}><RellenarIcon /></SmallIcon>Rellenar<Caret $c="#b5b8bc" $ml={2} /></SmallRow>
            </SmallCol>
          </GroupBody>
          <GroupLabel>Formas</GroupLabel>
        </Group>
        <Group $w={63}>
          <GroupBody $pr={4}>
            <LargeBtn $w={58} $off>
              <LargeIcon>
                <SizeLines>
                  <SizeLine $h={1} /><SizeLine $h={2} /><SizeLine $h={3} /><SizeLine $h={5} /><SizeLine $h={8} $mt={1} />
                </SizeLines>
              </LargeIcon>
              <LargeText $mt={1}>Tamaño</LargeText>
              <LargeText><Caret $c="#b5b8bc" /></LargeText>
            </LargeBtn>
          </GroupBody>
          <GroupLabel>&nbsp;</GroupLabel>
        </Group>
        <Group $w={434}>
          <GroupBody $pl={4}>
            <LargeBtn $w={50} $on $pr={1}>
              <LargeIcon><Swatch1 /></LargeIcon>
              <LargeText $mt={1}>Color</LargeText>
              <LargeText>1</LargeText>
            </LargeBtn>
            <LargeBtn $w={50}>
              <LargeIcon><Swatch2 /></LargeIcon>
              <LargeText $mt={1}>Color</LargeText>
              <LargeText>2</LargeText>
            </LargeBtn>
            <Palette>
              {TOP.map(c => <Cell key={c} $c={c} />)}
              {MID.map(c => <Cell key={c} $c={c} />)}
              {Array.from({ length: 10 }, (_, i) => <Cell key={i} $empty />)}
            </Palette>
            <LargeBtn $w={50}>
              <LargeIcon><Spectrum /></LargeIcon>
              <LargeText $mt={1}>Editar</LargeText>
              <LargeText>colores</LargeText>
            </LargeBtn>
          </GroupBody>
          <GroupLabel>Colores</GroupLabel>
        </Group>
      </Ribbon>
      <Workspace>
        <Canvas>
          <Handle $x={605} $y={163} />
          <Handle $x={301} $y={329} />
          <Handle $x={605} $y={329} />
        </Canvas>
      </Workspace>
      <Status>
        <StatusCell $w={200} $pl={3}><MoveIcon /></StatusCell>
        <StatusCell $w={200} $pl={4}><SelSize /></StatusCell>
        <StatusCell $w={200} $pl={5}><CanvasSize />605 × 329 píxeles</StatusCell>
        <StatusCell $w={200} />
        <StatusCell $w={321} />
        <ZoomArea>
          <ZoomPct>100%</ZoomPct>
          <ZoomBtn />
          <Slider><Thumb><ThumbIcon /></Thumb></Slider>
          <ZoomBtn plus />
        </ZoomArea>
      </Status>
      <Taskbar>
        <Start><WinLogo /></Start>
        <Apps>
          <AppSlot><IE /></AppSlot>
          <AppSlot><Folder /></AppSlot>
          <AppSlot $state="open"><ChromeB /></AppSlot>
          <AppSlot><Opera /></AppSlot>
          <AppSlot><Vlc /></AppSlot>
          <AppSlot $state="open"><Word /></AppSlot>
          <AppSlot $state="open"><UTorrent /></AppSlot>
          <AppSlot $state="active"><PaintLogo /></AppSlot>
        </Apps>
        <Tray>
          <TrayItem $w={28}><TrayUp /></TrayItem>
          <TrayItem $w={4} />
          <TrayItem $w={30}><FlagIcon /></TrayItem>
          <TrayItem $w={30}><BatteryIcon /></TrayItem>
          <TrayItem $w={28}><VolumeIcon /></TrayItem>
          <TrayItem $w={36}><NetIcon /></TrayItem>
          <Clock>5:34 p. m.<br />22/1/16</Clock>
        </Tray>
      </Taskbar>
    </Page>
  );
}
